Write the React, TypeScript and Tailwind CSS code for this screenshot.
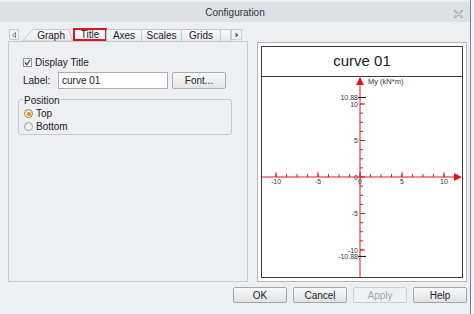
const FONT = { fontFamily: '"Liberation Sans", Arial, sans-serif' };

const X_MAJOR = [-10, -5, 0, 5, 10];
const Y_MAJOR = [10, 5, 0, -5, -10];

// plot scale, in px per unit
const sx = (v: number) => 98 + v * 8.4;
const sy = (v: number) => 100 - v * 7.3;

function Plot() {
  const minors: number[] = [];
  for (let v = -10; v <= 10; v += 1.25) minors.push(v);
  const red = '#e8141c';
  return (
    <svg width="200" height="200" viewBox="0 0 200 200" className="block">
      {/* axes */}
      <line x1="0" y1="100" x2="193" y2="100" stroke={red} strokeWidth="1" />
      <polygon points="192,96 200,100 192,104" fill={red} />
      <line x1="98" y1="8" x2="98" y2="200" stroke={red} strokeWidth="1" />
      <polygon points="94,8 98,0 102,8" fill={red} />

      {minors.map((v) => (
        <g key={`m${v}`}>
          <line x1={sx(v)} y1={97} x2={sx(v)} y2={100} stroke={red} />
          <line x1={98} y1={sy(v)} x2={101} y2={sy(v)} stroke={red} />
        </g>
      ))}
      {X_MAJOR.map((v) => (
        <line key={`xt${v}`} x1={sx(v)} y1={95} x2={sx(v)} y2={100} stroke={red} />
      ))}
      {Y_MAJOR.map((v) => (
        <line key={`yt${v}`} x1={98} y1={sy(v)} x2={103} y2={sy(v)} stroke={red} />
      ))}

      {/* data range marks */}
      <line x1="96" y1={sy(10.88)} x2="104" y2={sy(10.88)} stroke="#111" />
      <line x1="96" y1={sy(-10.88)} x2="104" y2={sy(-10.88)} stroke="#111" />

      <g fontSize="7" fill="#333" style={FONT}>
        {X_MAJOR.map((v) => (
          <text key={`xl${v}`} x={sx(v)} y={107} textAnchor="middle">
            {v}
          </text>
        ))}
        {Y_MAJOR.map((v) => (
          <text key={`yl${v}`} x={96} y={sy(v) + 2.5} textAnchor="end">
            {v}
          </text>
        ))}
        <text x={96} y={sy(10.88) + 2.5} textAnchor="end">10.88</text>
        <text x={96} y={sy(-10.88) + 2.5} textAnchor="end">-10.88</text>
        <text x={106} y={7} fontSize="7.5">My (kN*m)</text>
      </g>
    </svg>
  );
}

function Tab({ label, width }: { label: string; width: string }) {
  return (
    <div
      className={`${width} h-[12px] flex items-center justify-center border border-b-0 border-[#c4c8ce] rounded-t-[2px] bg-gradient-to-b from-[#f7f8f9] to-[#e7e9ec] text-[10px] text-[#222] -ml-px`}
    >
      {label}
    </div>
  );
}

function Button({ label, disabled = false }: { label: string; disabled?: boolean }) {
  return (
    <div
      className={`w-[54px] h-[16px] flex items-center justify-center rounded-[2px] border text-[10px] ${
        disabled
          ? 'border-[#c9ccd0] bg-[#eef0f2] text-[#a4a8ad]'
          : 'border-[#a2a6ac] bg-gradient-to-b from-[#f8f9fa] to-[#dfe2e6] text-[#222]'
      }`}
    >
      {label}
    </div>
  );
}

export default function App() {
  return (
    <div className="w-[474px] h-[314px] flex bg-[#f4f5f7] overflow-hidden" style={FONT}>
      <div className="w-[471px] h-full flex flex-col bg-[#edeff3] border-r border-[#7a7e84]">
        {/* title bar */}
        <div className="h-[22px] relative flex items-center justify-center bg-[#dde1e6] border-t-[2px] border-[#e9ecef]">
          <span className="text-[10px] text-[#333]">Configuration</span>
          <svg
            width="9"
            height="8"
            viewBox="0 0 9 8"
            className="absolute right-[7px] top-[8px]"
          >
            <path
              d="M1 1 L8 7 M8 1 L1 7"
              stroke="#9aa0a6"
              strokeWidth="2.2"
              strokeLinecap="round"
            />
            <path d="M1 1 L8 7 M8 1 L1 7" stroke="#eceef1" strokeWidth="0.8" />
          </svg>
        </div>

        <div className="flex pl-[8px] pt-[6px]">
          {/* left column */}
          <div className="w-[240px] flex flex-col">
            {/* tab strip */}
            <div className="h-[13px] flex items-end">
              <div className="w-[10px] h-[11px] ml-px mb-px flex items-center justify-center border border-[#c9cdd2] bg-[#f1f2f4]">
                <svg width="4" height="6" viewBox="0 0 4 6">
                  <polygon points="3.5,0.5 0.5,3 3.5,5.5" fill="none" stroke="#7b8087" />
                </svg>
              </div>
              <div className="w-[51px] h-[12px] ml-[3px] relative flex items-center justify-end pr-[8px] text-[10px] text-[#222]">
                <svg
                  width="51"
                  height="12"
                  viewBox="0 0 51 12"
                  className="absolute left-0 top-0"
                >
                  <defs>
                    <linearGradient id="tg" x1="0" y1="0" x2="0" y2="1">
                      <stop offset="0" stopColor="#f7f8f9" />
                      <stop offset="1" stopColor="#e7e9ec" />
                    </linearGradient>
                  </defs>
                  <polygon
                    points="0.5,12 11,0.5 47,0.5 50.5,12"
                    fill="url(#tg)"
                    stroke="#c4c8ce"
                  />
                </svg>
                <span className="relative">Graph</span>
              </div>
              <div className="w-[34px] h-[13px] flex items-center justify-center border-2 border-[#e0141e] bg-[#f8f9fa] text-[10px] text-[#222]">
                Title
              </div>
              <Tab label="Axes" width="w-[36px]" />
              <Tab label="Scales" width="w-[41px]" />
              <Tab label="Grids" width="w-[40px]" />
              <Tab label="" width="w-[11px]" />
              <div className="w-[11px] h-[11px] mb-px flex items-center justify-center border border-[#c9cdd2] bg-[#f1f2f4]">
                <svg width="4" height="6" viewBox="0 0 4 6">
                  <polygon points="0.5,0.5 3.5,3 0.5,5.5" fill="#5b6067" />
                </svg>
              </div>
            </div>

            {/* tab panel */}
            <div className="h-[241px] border border-[#c6cad0] bg-[#edeff3] pl-[14px] pt-[15px] text-[10px] text-[#222]">
              <div className="h-[10px] flex items-center">
                <div className="w-[9px] h-[9px] border border-[#8e949b] bg-gradient-to-br from-[#e4e7ea] to-[#ffffff] flex items-center justify-center">
                  <svg width="7" height="7" viewBox="0 0 7 7">
                    <path d="M1 3.5 L3 5.8 L6 0.8" fill="none" stroke="#3b4049" strokeWidth="1.2" />
                  </svg>
                </div>
                <span className="ml-[3px]">Display Title</span>
              </div>

              <div className="mt-[5px] flex items-center">
                <span className="w-[35px]">Label:</span>
                <div className="w-[110px] h-[17px] flex items-center pl-[3px] border border-[#a9adb3] bg-white">
                  curve 01
                </div>
                <div className="ml-[4px] w-[54px] h-[17px] flex items-center justify-center rounded-[2px] border border-[#a9adb3] bg-gradient-to-b from-[#f8f9fa] to-[#e1e4e8]">
                  Font...
                </div>
              </div>

              <div className="mt-[10px] -ml-[5px] w-[214px] h-[36px] relative border border-[#c6cad0] rounded-[3px] pl-[5px] pt-[7px]">
                <span className="absolute -top-[7px] left-[4px] px-[1px] bg-[#edeff3]">
                  Position
                </span>
                <div className="h-[13px] flex items-center">
                  <div className="w-[9px] h-[9px] rounded-full border border-[#a07a4a] bg-[#fbe9d4] flex items-center justify-center">
                    <div className="w-[4px] h-[4px] rounded-full bg-[#e88a1e]" />
                  </div>
                  <span className="ml-[3px]">Top</span>
                </div>
                <div className="h-[13px] flex items-center">
                  <div className="w-[9px] h-[9px] rounded-full border border-[#9aa0a7] bg-gradient-to-br from-[#dde0e4] to-[#fafbfc]" />
                  <span className="ml-[3px]">Bottom</span>
                </div>
              </div>
            </div>
          </div>

          {/* preview */}
          <div className="ml-[9px] mt-[14px] w-[210px] h-[240px] border border-[#b4b8bd] bg-white p-[3px]">
            <div className="h-full flex flex-col border border-[#3c3c3c]">
              <div className="h-[30px] flex items-center justify-center border-b border-[#3c3c3c] text-[15px] text-[#222]">
                curve 01
              </div>
              <div className="flex-1 overflow-hidden">
                <Plot />
              </div>
            </div>
          </div>
        </div>

        {/* button row */}
        <div className="mt-[5px] ml-[233px] flex gap-[6px]">
          <Button label="OK" />
          <Button label="Cancel" />
          <Button label="Apply" disabled />
          <Button label="Help" />
        </div>
      </div>
    </div>
  );
}
